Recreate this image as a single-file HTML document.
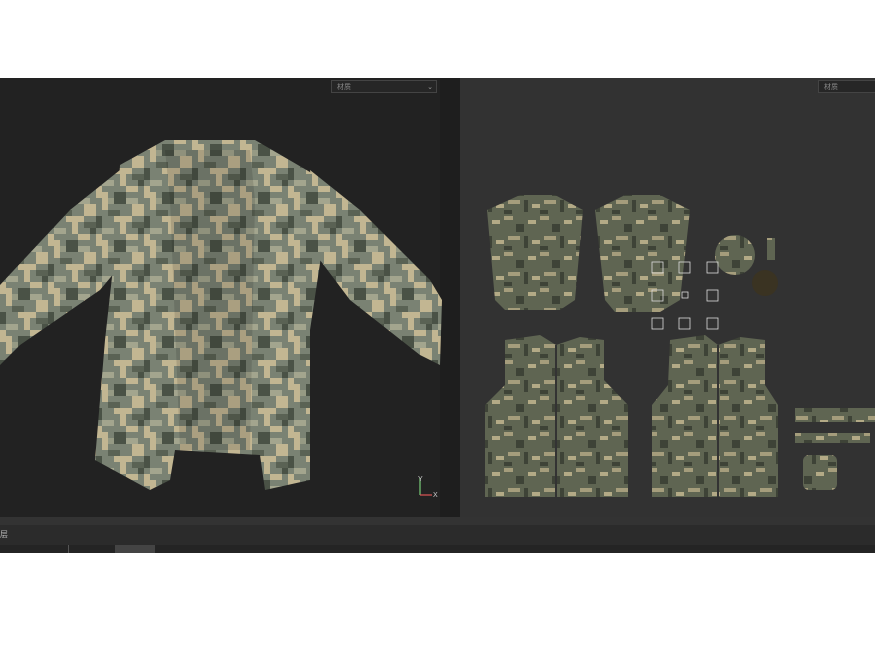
<!DOCTYPE html>
<html><head><meta charset="utf-8"><style>
html,body{margin:0;padding:0;background:#fff;width:875px;height:656px;overflow:hidden;font-family:"Liberation Sans","Noto Sans CJK SC",sans-serif}
#app{position:absolute;left:0;top:78px;width:875px;height:475px;background:#2b2b2b}
.lv{position:absolute;left:0;top:0;width:440px;height:439px;background:#222}
.div{position:absolute;left:440px;top:0;width:20px;height:439px;background:#1e1e1e}
.rv{position:absolute;left:460px;top:0;width:415px;height:439px;background:#323232}
.sel{position:absolute;height:13px;border:1px solid #444;background:#262626;color:#888;font-size:7px;line-height:13px;padding-left:5px;box-sizing:border-box}
.bar1{position:absolute;left:0;top:439px;width:875px;height:8px;background:#333}
.bar3{position:absolute;left:0;top:467px;width:875px;height:8px;background:#242424}
</style></head><body>
<div id="app">
<div class="lv"></div><div class="div"></div><div class="rv"></div>
<div class="sel" style="left:331px;top:2px;width:106px">材质<span style="position:absolute;right:3px;color:#999">⌄</span></div>
<div class="sel" style="left:818px;top:2px;width:60px">材质</div>
<div class="bar1"></div><div class="bar3"></div>
<div style="position:absolute;left:0;top:451px;color:#bbb;font-size:8px">层</div>
<div style="position:absolute;left:115px;top:467px;width:40px;height:8px;background:#444"></div>
<div style="position:absolute;left:68px;top:467px;width:1px;height:8px;background:#555"></div>
</div>
<svg width="875" height="656" style="position:absolute;left:0;top:0">
<defs>
<pattern id="c" width="48" height="48" patternUnits="userSpaceOnUse">
<rect width="48" height="48" fill="#7a8273"/>
<rect x="0" y="0" width="12" height="6" fill="#c2b692"/><rect x="6" y="6" width="6" height="12" fill="#c2b692"/>
<rect x="18" y="0" width="12" height="12" fill="#4a5246"/><rect x="30" y="6" width="12" height="6" fill="#a3a58e"/>
<rect x="36" y="12" width="12" height="12" fill="#c2b692"/><rect x="12" y="18" width="12" height="6" fill="#5a6254"/>
<rect x="0" y="24" width="6" height="12" fill="#4a5246"/><rect x="18" y="24" width="18" height="6" fill="#c2b692"/>
<rect x="24" y="30" width="6" height="12" fill="#c2b692"/><rect x="6" y="36" width="12" height="6" fill="#a3a58e"/>
<rect x="36" y="30" width="12" height="6" fill="#5a6254"/><rect x="30" y="42" width="12" height="6" fill="#c2b692"/>
<rect x="0" y="42" width="6" height="6" fill="#c2b692"/><rect x="12" y="6" width="6" height="6" fill="#969a84"/>
<rect x="42" y="36" width="6" height="6" fill="#4a5246"/>
</pattern>
<pattern id="d" width="36" height="36" patternUnits="userSpaceOnUse">
<rect width="36" height="36" fill="#5f6552"/>
<rect x="0" y="0" width="9" height="4" fill="#a59d7c"/><rect x="12" y="8" width="8" height="8" fill="#3e4337"/>
<rect x="24" y="4" width="8" height="4" fill="#b3aa86"/><rect x="4" y="20" width="12" height="4" fill="#a59d7c"/>
<rect x="20" y="20" width="4" height="12" fill="#3e4337"/><rect x="28" y="24" width="8" height="4" fill="#b3aa86"/>
<rect x="0" y="30" width="8" height="4" fill="#3e4337"/>
</pattern>
</defs>
<g fill="url(#c)">
<polygon points="120,170 70,210 0,285 0,365 20,345 100,290 125,260"/>
<polygon points="310,170 360,210 430,280 442,300 440,365 420,355 350,300 320,260"/>
<polygon points="120,165 165,140 255,140 315,175 325,230 310,330 310,480 265,490 260,455 175,450 170,480 150,490 95,460 105,340 115,250"/>
</g>
<polygon points="165,150 250,150 255,200 250,450 180,450 170,200" fill="#000" opacity=".12"/>
<g fill="url(#d)">
<polygon points="487,210 520,195 555,195 583,210 575,300 560,310 505,310 495,300"/>
<polygon points="595,210 625,195 660,195 690,210 680,300 660,312 615,312 605,300"/>
<polygon points="505,340 540,335 556,345 580,337 604,340 604,380 628,405 628,497 485,497 485,405 505,385"/>
<polygon points="670,340 705,335 718,345 740,337 765,340 765,385 778,405 778,497 652,497 652,405 668,385"/>
<rect x="795" y="408" width="80" height="14"/><rect x="795" y="433" width="75" height="10"/>
<rect x="803" y="455" width="34" height="35" rx="6"/>
<circle cx="735" cy="255" r="20"/><rect x="767" y="238" width="8" height="22"/>
</g>
<line x1="556" y1="345" x2="556" y2="497" stroke="#333" stroke-width="2"/>
<line x1="718" y1="345" x2="718" y2="497" stroke="#333" stroke-width="2"/>
<circle cx="765" cy="283" r="13" fill="#3a3322"/>
<g fill="none" stroke="#ddd" stroke-width=".8">
<rect x="652" y="262" width="11" height="11"/><rect x="679" y="262" width="11" height="11"/><rect x="707" y="262" width="11" height="11"/>
<rect x="652" y="290" width="11" height="11"/><rect x="682" y="292" width="6" height="6"/><rect x="707" y="290" width="11" height="11"/>
<rect x="652" y="318" width="11" height="11"/><rect x="679" y="318" width="11" height="11"/><rect x="707" y="318" width="11" height="11"/>
</g>
<g stroke-width="1.2"><line x1="420" y1="495" x2="420" y2="478" stroke="#7c7"/><line x1="420" y1="495" x2="432" y2="495" stroke="#d55"/></g>
<text x="418" y="481" fill="#ccc" font-size="7" font-family="Liberation Sans">Y</text>
<text x="433" y="497" fill="#ccc" font-size="7" font-family="Liberation Sans">X</text>
</svg>
</body></html>
